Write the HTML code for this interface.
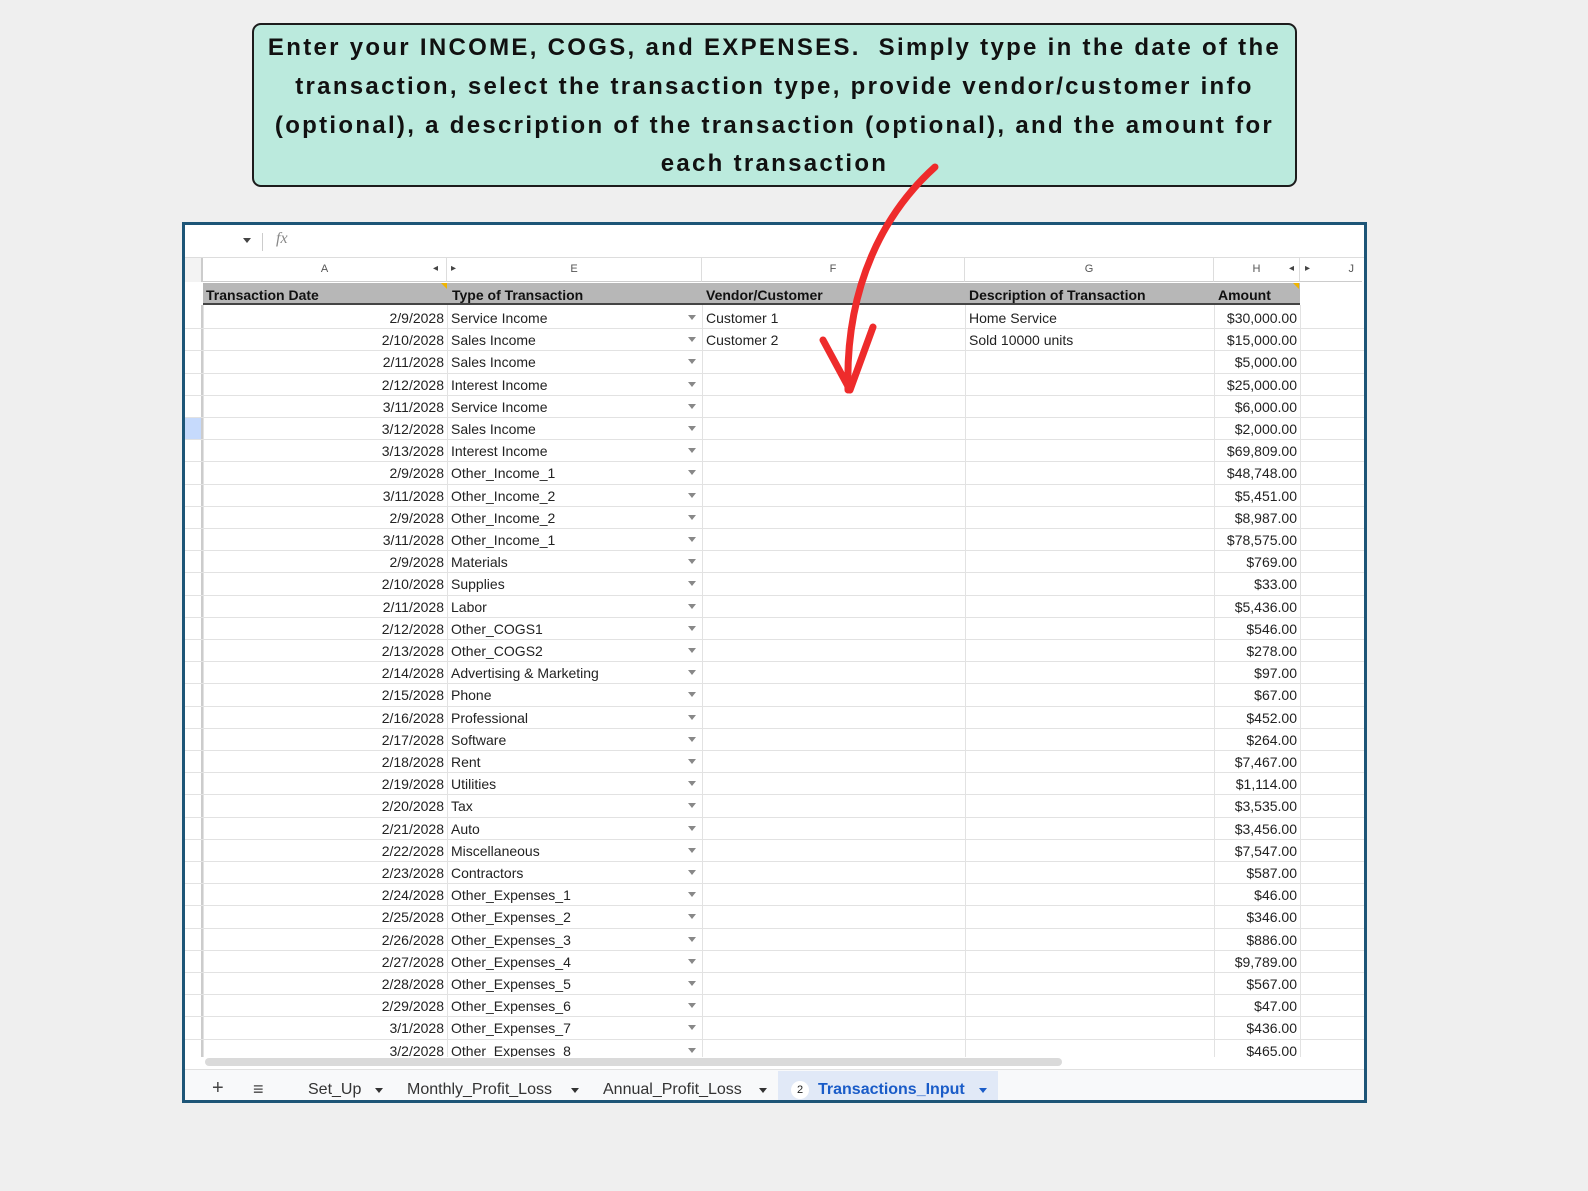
<!DOCTYPE html>
<html><head><meta charset="utf-8"><style>
*{margin:0;padding:0;box-sizing:border-box}
body{width:1588px;height:1191px;background:#efefef;position:relative;overflow:hidden;font-family:"Liberation Sans",Arial,sans-serif}
.callout{position:absolute;left:252px;top:23px;width:1045px;height:164px;background:#bbeadd;border:2px solid #1c1c1c;border-radius:9px}
.callout div{position:absolute;left:0;right:0;text-align:center;font-weight:bold;font-size:24px;letter-spacing:2.3px;color:#111;white-space:pre}
.sheet{position:absolute;left:182px;top:222px;width:1185px;height:881px;background:#fff;border:3px solid #1d5577}
.abs{position:absolute}
.cell{position:absolute;font-size:14px;color:#222;white-space:nowrap;overflow:hidden;line-height:22px}
.hl{position:absolute;height:1px;background:#e2e2e2}
.vl{position:absolute;width:1px;background:#e2e2e2}
.dd{position:absolute;width:0;height:0;border-left:4px solid transparent;border-right:4px solid transparent;border-top:5px solid #888}
</style></head><body>
<div class="callout">
<div style="top:9px">Enter your INCOME, COGS, and EXPENSES.  Simply type in the date of the</div>
<div style="top:48px">transaction, select the transaction type, provide vendor/customer info</div>
<div style="top:87px">(optional), a description of the transaction (optional), and the amount for</div>
<div style="top:125px">each transaction</div>
</div>
<div class="sheet" id="s">
<div class="abs" style="left:58px;top:13px;width:0;height:0;border-left:4px solid transparent;border-right:4px solid transparent;border-top:5px solid #444"></div>
<div class="abs" style="left:77px;top:8px;width:1px;height:18px;background:#ccc"></div>
<div class="abs" style="left:91px;top:5px;font-family:'Liberation Serif',serif;font-style:italic;font-size:16px;color:#888">fx</div>
<div class="abs" style="left:0;top:32px;width:1179px;height:1px;background:#ddd"></div>
</div>
<svg class="abs" style="left:0;top:0" width="1588" height="1191">
<path d="M935,167 C885,212 845,285 848,390" fill="none" stroke="#ee2b2b" stroke-width="7" stroke-linecap="round"/>
<path d="M823,340 L850,390 L873,327" fill="none" stroke="#ee2b2b" stroke-width="7" stroke-linecap="round" stroke-linejoin="round"/>
</svg>
<script>
const s=document.getElementById('s');
let h='';
const ox=185,oy=225;
const cols=[[203,447,'A'],[447,702,'E'],[702,965,'F'],[965,1214,'G'],[1214,1300,'H']];
h+=`<div class="abs" style="left:0;top:${258-oy}px;width:18px;height:24px;background:#f3f3f3;border-right:2px solid #ccc"></div>`;
cols.forEach(c=>{
 const l=c[0]-ox,w=c[1]-c[0];
 h+=`<div class="abs" style="left:${l}px;top:${258-oy}px;width:${w}px;height:24px;border-right:1px solid #ddd;border-bottom:1px solid #ccc;font-size:11px;color:#555;text-align:center;line-height:22px">${c[2]}</div>`;
});
h+=`<div class="abs" style="left:${1300-ox}px;top:${258-oy}px;width:62px;height:24px;border-bottom:1px solid #ccc;font-size:11px;color:#555;text-align:right;padding-right:8px;line-height:22px">J</div>`;
[[433,'◂'],[451,'▸'],[1289,'◂'],[1305,'▸']].forEach(a=>{h+=`<div class="abs" style="left:${a[0]-ox}px;top:${263-oy}px;font-size:10px;color:#444">${a[1]}</div>`});
h+=`<div class="abs" style="left:${203-ox}px;top:${283-oy}px;width:${1300-203}px;height:22px;background:#b7b7b7;border-bottom:2px solid #444"></div>`;
h+=`<div class="abs" style="left:${441-ox}px;top:${283-oy}px;width:0;height:0;border-left:6px solid transparent;border-top:6px solid #f0b400"></div>`;
h+=`<div class="abs" style="left:${1293-ox}px;top:${283-oy}px;width:0;height:0;border-left:6px solid transparent;border-top:6px solid #f0b400"></div>`;
[['Transaction Date',206],['Type of Transaction',452],['Vendor/Customer',706],['Description of Transaction',969],['Amount',1218]].forEach(t=>{
 h+=`<div class="cell" style="left:${t[1]-ox}px;top:${284-oy}px;font-weight:bold;color:#111">${t[0]}</div>`;});
const rows=[['2/9/2028','Service Income','Customer 1','Home Service','$30,000.00'],['2/10/2028','Sales Income','Customer 2','Sold 10000 units','$15,000.00'],['2/11/2028','Sales Income','','','$5,000.00'],['2/12/2028','Interest Income','','','$25,000.00'],['3/11/2028','Service Income','','','$6,000.00'],['3/12/2028','Sales Income','','','$2,000.00'],['3/13/2028','Interest Income','','','$69,809.00'],['2/9/2028','Other_Income_1','','','$48,748.00'],['3/11/2028','Other_Income_2','','','$5,451.00'],['2/9/2028','Other_Income_2','','','$8,987.00'],['3/11/2028','Other_Income_1','','','$78,575.00'],['2/9/2028','Materials','','','$769.00'],['2/10/2028','Supplies','','','$33.00'],['2/11/2028','Labor','','','$5,436.00'],['2/12/2028','Other_COGS1','','','$546.00'],['2/13/2028','Other_COGS2','','','$278.00'],['2/14/2028','Advertising & Marketing','','','$97.00'],['2/15/2028','Phone','','','$67.00'],['2/16/2028','Professional','','','$452.00'],['2/17/2028','Software','','','$264.00'],['2/18/2028','Rent','','','$7,467.00'],['2/19/2028','Utilities','','','$1,114.00'],['2/20/2028','Tax','','','$3,535.00'],['2/21/2028','Auto','','','$3,456.00'],['2/22/2028','Miscellaneous','','','$7,547.00'],['2/23/2028','Contractors','','','$587.00'],['2/24/2028','Other_Expenses_1','','','$46.00'],['2/25/2028','Other_Expenses_2','','','$346.00'],['2/26/2028','Other_Expenses_3','','','$886.00'],['2/27/2028','Other_Expenses_4','','','$9,789.00'],['2/28/2028','Other_Expenses_5','','','$567.00'],['2/29/2028','Other_Expenses_6','','','$47.00'],['3/1/2028','Other_Expenses_7','','','$436.00'],['3/2/2028','Other_Expenses_8','','','$465.00']];
const top0=307,ph=22.2,bottom=1057;
[203,447,702,965,1214,1300].forEach(x=>{h+=`<div class="vl" style="left:${x-ox}px;top:${305-oy}px;height:${bottom-305}px"></div>`});
h+=`<div class="abs" style="left:0;top:${305-oy}px;width:18px;height:${bottom-305}px;border-right:2px solid #ccc"></div>`;
h+=`<div class="abs" style="left:0;top:${top0+5*ph-oy}px;width:16px;height:${ph}px;background:#c6dafc"></div>`;
rows.forEach((r,i)=>{
 const y=top0+i*ph-oy;
 h+=`<div class="hl" style="left:0;top:${y+ph-1}px;width:1179px"></div>`;
 h+=`<div class="cell" style="left:${203-ox}px;top:${y}px;width:241px;text-align:right">${r[0]}</div>`;
 h+=`<div class="cell" style="left:${451-ox}px;top:${y}px">${r[1]}</div>`;
 h+=`<div class="dd" style="left:${688-ox}px;top:${y+8}px"></div>`;
 h+=`<div class="cell" style="left:${706-ox}px;top:${y}px">${r[2]}</div>`;
 h+=`<div class="cell" style="left:${969-ox}px;top:${y}px">${r[3]}</div>`;
 h+=`<div class="cell" style="left:${1214-ox}px;top:${y}px;width:83px;text-align:right">${r[4]}</div>`;
});
h+=`<div class="abs" style="left:0;top:${bottom-oy}px;width:1179px;height:${1103-bottom-3}px;background:#fff"></div>`;
h+=`<div class="abs" style="left:${205-ox}px;top:${1058-oy}px;width:${1062-205}px;height:8px;border-radius:4px;background:#dadada"></div>`;
h+=`<div class="abs" style="left:0;top:${1069-oy}px;width:1179px;height:1px;background:#e0e0e0"></div>`;
h+=`<div class="abs" style="left:0;top:${1070-oy}px;width:1179px;height:30px;background:#f8f9fa"></div>`;
h+=`<div class="abs" style="left:${212-ox}px;top:${1077-oy}px;font-size:20px;color:#444">+</div>`;
h+=`<div class="abs" style="left:${253-ox}px;top:${1079-oy}px;font-size:18px;color:#444">≡</div>`;
h+=`<div class="abs" style="left:${778-ox}px;top:${1071-oy}px;width:220px;height:29px;background:#e1e9f7"></div>`;
h+=`<div class="abs" style="left:${791-ox}px;top:${1081-oy}px;width:18px;height:18px;border-radius:9px;background:#fff;font-size:11px;text-align:center;line-height:18px;color:#222">2</div>`;
[['Set_Up',308,'#333',375],['Monthly_Profit_Loss',407,'#333',571],['Annual_Profit_Loss',603,'#333',759],['Transactions_Input',818,'#1a5cc8',979]].forEach(t=>{
 h+=`<div class="abs" style="left:${t[1]-ox}px;top:${1081-oy}px;font-size:16px;color:${t[2]};${t[2]!='#333'?'font-weight:bold;':''}">${t[0]}</div>`;
 h+=`<div class="abs" style="left:${t[3]-ox}px;top:${1088-oy}px;width:0;height:0;border-left:4px solid transparent;border-right:4px solid transparent;border-top:5px solid ${t[2]}"></div>`;
});
s.insertAdjacentHTML('beforeend',h);
</script>
</body></html>
